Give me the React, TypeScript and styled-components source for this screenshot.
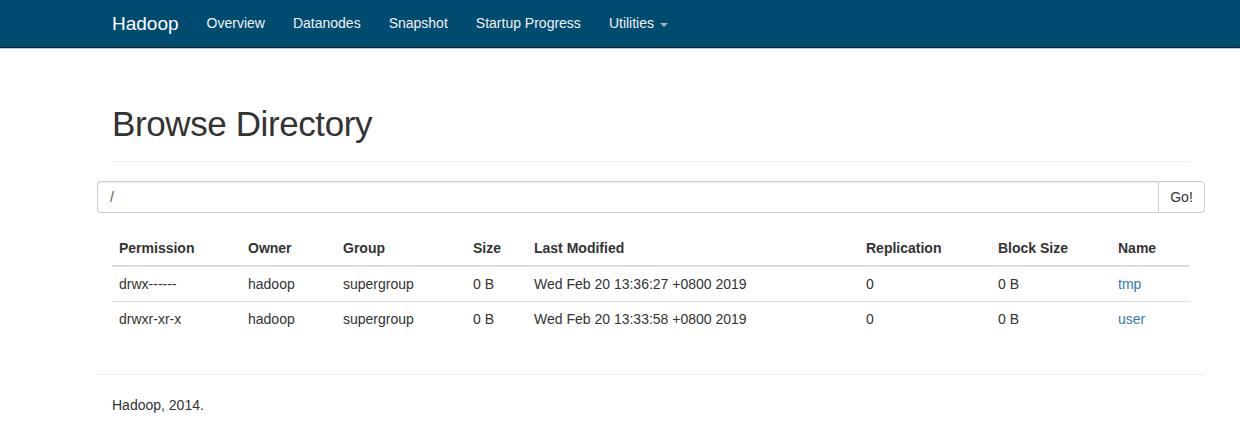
import React from "react";
import styled, { createGlobalStyle } from "styled-components";

const GlobalStyle = createGlobalStyle`
  html, body {
    margin: 0;
    padding: 0;
    background: #fff;
  }
  body {
    font-family: "Liberation Sans", Arial, sans-serif;
    font-size: 14px;
    line-height: 20px;
    color: #333;
  }
  * {
    box-sizing: border-box;
  }
`;

const Navbar = styled.nav`
  height: 48px;
  background: #004b70;
  border-bottom: 1px solid #0d2634;
  box-shadow: 0 1px 0 #c8c8c8;
`;

const NavInner = styled.div`
  display: flex;
  align-items: center;
  height: 47px;
  padding-left: 97px;
`;

const Brand = styled.a`
  padding: 0 14px 0 15px;
  font-size: 19px;
  line-height: 47px;
  color: #fff;
  text-decoration: none;
`;

const NavLink = styled.a`
  display: flex;
  align-items: center;
  padding: 0 14px;
  line-height: 47px;
  color: #f2f2f2;
  text-decoration: none;
`;

const Caret = styled.span`
  display: inline-block;
  margin-left: 6px;
  margin-top: 2px;
  border-top: 4px solid #9fb4c2;
  border-left: 4px solid transparent;
  border-right: 4px solid transparent;
`;

const Container = styled.div`
  margin-left: 97px;
  margin-right: 35px;
`;

const PageHeader = styled.div`
  margin: 0 15px;
  padding: 56px 0 17px;
  border-bottom: 1px solid #eee;
`;

const Title = styled.h1`
  margin: 0;
  font-family: "Liberation Sans", Arial, sans-serif;
  font-size: 35px;
  font-weight: 400;
  letter-spacing: -0.4px;
  line-height: 40px;
  color: #333;
`;

const InputGroup = styled.form`
  display: flex;
  margin-top: 19px;
  height: 32px;
`;

const PathInput = styled.input`
  flex: 1;
  height: 32px;
  padding: 0 12px;
  font-family: "Liberation Sans", Arial, sans-serif;
  font-size: 14px;
  color: #555;
  border: 1px solid #ccc;
  border-right: none;
  border-radius: 4px 0 0 4px;
  box-shadow: inset 0 1px 1px rgba(0, 0, 0, 0.075);
  outline: none;
`;

const GoButton = styled.button`
  width: 47px;
  height: 32px;
  padding: 0;
  font-family: "Liberation Sans", Arial, sans-serif;
  font-size: 14px;
  color: #333;
  background: #fff;
  border: 1px solid #ccc;
  border-radius: 0 4px 4px 0;
`;

const Table = styled.table`
  width: calc(100% - 30px);
  margin: 17px 15px 0;
  border-collapse: collapse;
  table-layout: fixed;
`;

const Th = styled.th`
  padding: 8px 8px 7px 7px;
  text-align: left;
  font-weight: 700;
  border-bottom: 2px solid #ddd;
  white-space: nowrap;
`;

const Td = styled.td`
  padding: 7px 8px 7px 7px;
  border-top: 1px solid #ddd;
  white-space: nowrap;
`;

const Link = styled.a`
  color: #337ab7;
  text-decoration: none;
`;

const Footer = styled.footer`
  margin-top: 38px;
  border-top: 1px solid #eee;
  padding: 20px 15px;
`;

const columns = [
  { label: "Permission", width: 129 },
  { label: "Owner", width: 95 },
  { label: "Group", width: 130 },
  { label: "Size", width: 61 },
  { label: "Last Modified", width: 332 },
  { label: "Replication", width: 132 },
  { label: "Block Size", width: 120 },
  { label: "Name", width: 79 },
];

const rows = [
  ["drwx------", "hadoop", "supergroup", "0 B", "Wed Feb 20 13:36:27 +0800 2019", "0", "0 B", "tmp"],
  ["drwxr-xr-x", "hadoop", "supergroup", "0 B", "Wed Feb 20 13:33:58 +0800 2019", "0", "0 B", "user"],
];

export default function App() {
  return (
    <>
      <GlobalStyle />
      <Navbar>
        <NavInner>
          <Brand href="#">Hadoop</Brand>
          <NavLink href="#">Overview</NavLink>
          <NavLink href="#">Datanodes</NavLink>
          <NavLink href="#">Snapshot</NavLink>
          <NavLink href="#">Startup Progress</NavLink>
          <NavLink href="#">
            Utilities
            <Caret />
          </NavLink>
        </NavInner>
      </Navbar>
      <Container>
        <PageHeader>
          <Title>Browse Directory</Title>
        </PageHeader>
        <InputGroup onSubmit={(e) => e.preventDefault()}>
          <PathInput defaultValue="/" />
          <GoButton type="submit">Go!</GoButton>
        </InputGroup>
        <Table>
          <colgroup>
            {columns.map((c) => (
              <col key={c.label} style={{ width: c.width }} />
            ))}
          </colgroup>
          <thead>
            <tr>
              {columns.map((c) => (
                <Th key={c.label}>{c.label}</Th>
              ))}
            </tr>
          </thead>
          <tbody>
            {rows.map((r) => (
              <tr key={r[7]}>
                {r.slice(0, 7).map((v, i) => (
                  <Td key={i}>{v}</Td>
                ))}
                <Td>
                  <Link href="#">{r[7]}</Link>
                </Td>
              </tr>
            ))}
          </tbody>
        </Table>
        <Footer>Hadoop, 2014.</Footer>
      </Container>
    </>
  );
}
